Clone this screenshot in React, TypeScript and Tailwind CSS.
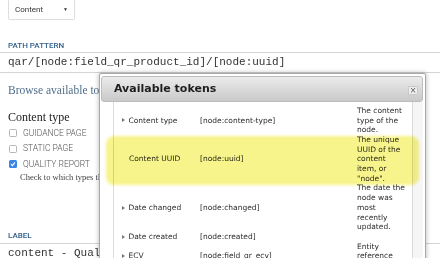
import React from 'react';

const sans = { fontFamily: '"DejaVu Sans", Verdana, sans-serif' };
const roboto = { fontFamily: 'Roboto, "Noto Sans", sans-serif' };
const serif = { fontFamily: '"Liberation Serif", "Times New Roman", serif' };
const mono = { fontFamily: '"Liberation Mono", "Courier New", monospace' };

type Token = { name: string; token: string; desc: string[]; expand: boolean };

const tokens: Token[] = [
  { name: 'Content type', token: '[node:content-type]', desc: ['The content', 'type of the', 'node.'], expand: true },
  { name: 'Content UUID', token: '[node:uuid]', desc: ['The unique', 'UUID of the', 'content', 'item, or', '"node".'], expand: false },
  { name: 'Date changed', token: '[node:changed]', desc: ['The date the', 'node was', 'most', 'recently', 'updated.'], expand: true },
  { name: 'Date created', token: '[node:created]', desc: ['\u00a0'], expand: true },
  { name: 'ECV', token: '[node:field_qr_ecv]', desc: ['Entity', 'reference', 'field.'], expand: true },
];

function Checkbox({ label, checked }: { label: string; checked?: boolean }) {
  return (
    <div className="flex h-[15.5px] items-center">
      <span
        className={
          checked
            ? 'ml-[9px] flex h-[8px] w-[8px] items-center justify-center rounded-[1.5px] bg-[#3b86e6]'
            : 'ml-[9px] h-[8px] w-[8px] rounded-[1.5px] border border-[#b4b4b4] bg-white'
        }
      >
        {checked && (
          <svg width="6" height="6" viewBox="0 0 6 6">
            <path d="M1 3.2 L2.4 4.6 L5 1.4" fill="none" stroke="white" strokeWidth="1.1" />
          </svg>
        )}
      </span>
      <span className="ml-[6px] text-[8.5px] font-light uppercase text-[#555]" style={roboto}>
        {label}
      </span>
    </div>
  );
}

function TokenDialog() {
  return (
    <div className="absolute left-[99px] top-[73px] flex h-[200px] w-[327px] flex-col rounded-[2px] border border-[#a9a9a9] bg-white pl-[1px] pr-[2px] pt-[2px] shadow-[0_0_5px_rgba(0,0,0,0.3)]">
      <div className="flex h-[26px] items-center justify-between rounded-[3px] border border-[#bdbdbd] bg-gradient-to-b from-[#ececec] to-[#c9c9c9] pl-[12px] pr-[4px]">
        <span className="text-[11px] font-bold text-[#1e1e1e]" style={sans}>
          Available tokens
        </span>
        <span className="mt-[3px] flex h-[9px] w-[10px] items-center justify-center rounded-[1px] border border-[#c8c8c8] bg-[#efefef] text-[8px] leading-none text-[#555]" style={sans}>
          ×
        </span>
      </div>
      <div className="ml-[12px] flex flex-1">
        <div className="w-[300px] border-x border-[#dcdcdc] pt-[3.85px]">
          {tokens.map((t) => (
            <div
              key={t.name}
              className="grid grid-cols-[86px_157px_56px] items-center text-[7.5px] leading-[9.7px] text-[#2b2b2b]"
              style={sans}
            >
              <div className="flex items-center pl-[8px]">
                {t.expand ? (
                  <span className="h-0 w-0 border-y-[2.5px] border-l-[3.5px] border-y-transparent border-l-[#777]" />
                ) : (
                  <span className="w-[3.5px]" />
                )}
                <span className="ml-[3.5px]">{t.name}</span>
              </div>
              <div>{t.token}</div>
              <div className="whitespace-nowrap">
                {t.desc.map((d, i) => (
                  <div key={i}>{d}</div>
                ))}
              </div>
            </div>
          ))}
        </div>
        <div className="flex-1 bg-[#f6f6f6]" />
      </div>
    </div>
  );
}

export default function App() {
  return (
    <div className="relative h-[258px] w-[440px] overflow-hidden bg-white">
      <div className="pl-[8px]">
        <div className="flex h-[20px] w-[67px] items-center justify-between rounded-b-[2px] border border-t-0 border-[#dedede] px-[6px] text-[8px] text-[#333]" style={roboto}>
          <span>Content</span>
          <span className="text-[5px] text-[#333]">▼</span>
        </div>
      </div>

      <div className="mt-[21px] h-[10px] pl-[8px] text-[8px] font-medium leading-[10px] text-[#2f5f8c]" style={roboto}>
        PATH PATTERN
      </div>
      <div className="mt-[1px] flex h-[21px] items-center border-y border-[#d4d4d4] pl-[8px] text-[11px] text-[#333]" style={mono}>
        qar/[node:field_qr_product_id]/[node:uuid]
      </div>

      <div className="mt-[12px] h-[10px] pl-[8px] text-[11.5px] leading-[10px] text-[#4f6d89]" style={serif}>
        Browse available tokens.
      </div>

      <div className="mt-[16px] h-[12px] pl-[8px] text-[12px] leading-[12px] text-[#222]" style={serif}>
        Content type
      </div>
      <div className="mt-[2.5px]">
        <Checkbox label="Guidance page" />
        <Checkbox label="Static page" />
        <Checkbox label="Quality report" checked />
      </div>
      <div className="h-[10px] pl-[20px] text-[8.5px] leading-[10px] text-[#444]" style={serif}>
        Check to which types this pattern should be applied.
      </div>

      <div className="mt-[48.5px] h-[10px] pl-[8px] text-[8px] font-medium leading-[10px] text-[#2f5f8c]" style={roboto}>
        LABEL
      </div>
      <div className="mt-[2.5px] flex h-[20px] items-center border-t border-[#d4d4d4] pl-[8px] text-[11px] text-[#333]" style={mono}>
        content - Quality report
      </div>

      <TokenDialog />

      <div className="pointer-events-none absolute left-[106px] top-[136px] h-[49px] w-[313px] rounded-[8px] bg-[#f4f16c] opacity-80 mix-blend-multiply blur-[1.5px]" />
    </div>
  );
}
